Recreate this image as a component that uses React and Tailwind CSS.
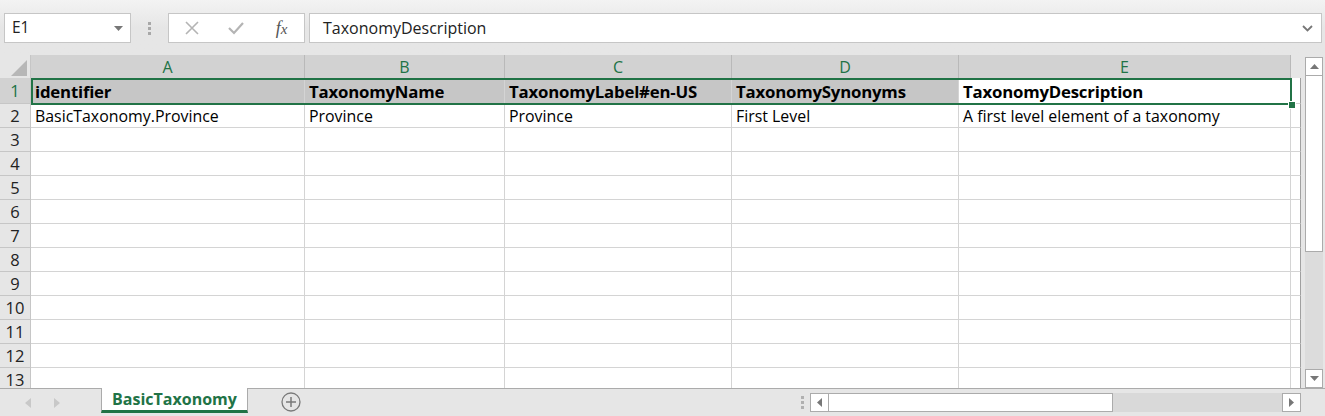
import React from 'react';

const columns = [
  { key: 'A', width: 'w-[274px]' },
  { key: 'B', width: 'w-[200px]' },
  { key: 'C', width: 'w-[227px]' },
  { key: 'D', width: 'w-[227px]' },
  { key: 'E', width: 'w-[332px]' },
];

const headerRow = ['identifier', 'TaxonomyName', 'TaxonomyLabel#en-US', 'TaxonomySynonyms', 'TaxonomyDescription'];
const dataRow = ['BasicTaxonomy.Province', 'Province', 'Province', 'First Level', 'A first level element of a taxonomy'];
const emptyRows = [3, 4, 5, 6, 7, 8, 9, 10, 11, 12, 13];

const FormulaBar = () => (
  <div className="h-[55px] flex items-start pt-[13px] bg-gradient-to-b from-[#f3f3f3] via-[#e6e6e6] to-[#e6e6e6]">
    {/* name box */}
    <div className="ml-[4px] w-[127px] h-[30px] bg-white border border-[#c6c6c6] flex items-center justify-between pl-[7px] pr-[7px]">
      <span className="text-[15.5px] text-[#222]">E1</span>
      <svg width="9" height="5" viewBox="0 0 9 5"><path d="M0 0h9L4.5 5z" fill="#777" /></svg>
    </div>
    <div className="w-[37px] h-[30px] flex flex-col items-center justify-center gap-[2px]">
      <div className="w-[3px] h-[3px] bg-[#a8a8a8]"></div>
      <div className="w-[3px] h-[3px] bg-[#a8a8a8]"></div>
      <div className="w-[3px] h-[3px] bg-[#a8a8a8]"></div>
    </div>
    {/* cancel / enter / fx */}
    <div className="w-[137px] h-[30px] bg-white border border-[#c6c6c6] flex items-center">
      <div className="w-[44px] flex justify-center pl-[2px]">
        <svg width="16" height="16" viewBox="0 0 16 16"><path d="M2 2l12 12M14 2L2 14" stroke="#b4b4b4" strokeWidth="1.6" /></svg>
      </div>
      <div className="w-[46px] flex justify-center">
        <svg width="18" height="16" viewBox="0 0 18 16"><path d="M2 8l5 5L16 3" stroke="#b4b4b4" strokeWidth="2.2" fill="none" /></svg>
      </div>
      <div className="w-[45px] flex justify-center">
        <span className="text-[18px] italic text-[#555] font-['Liberation_Serif',serif] leading-none">f<span className="text-[15px]">x</span></span>
      </div>
    </div>
    {/* formula input */}
    <div className="ml-[4px] w-[1013px] h-[30px] bg-white border border-[#c6c6c6] flex items-center justify-between pl-[13px] pr-[8px]">
      <span className="text-[16px] text-[#222]">TaxonomyDescription</span>
      <svg width="11" height="7" viewBox="0 0 11 7"><path d="M1 1l4.5 4.5L10 1" stroke="#777" strokeWidth="1.8" fill="none" /></svg>
    </div>
  </div>
);

const ColumnHeader = () => (
  <div className="flex h-[23px]">
    <div className="w-[31px] h-[23px] bg-[#e6e6e6] border-r border-[#c6c6c6] flex items-end justify-end pr-[3px] pb-[2px]">
      <svg width="16" height="16" viewBox="0 0 16 16"><path d="M16 0V16H0z" fill="#b7b7b7" /></svg>
    </div>
    {columns.map(c => (
      <div key={c.key} className={`${c.width} h-[23px] bg-[#d2d2d2] border-r border-[#b9b9b9] flex items-center justify-center text-[16px] text-[#217346]`}>
        {c.key}
      </div>
    ))}
    <div className="w-[10px] h-[23px] bg-[#e6e6e6]"></div>
  </div>
);

const RowHeader = ({ n, selected }) => (
  <div className={`w-[31px] h-full border-r border-b border-[#c6c6c6] flex items-center justify-center pt-[2px] text-[16.5px] ${selected ? 'bg-[#d2d2d2] text-[#217346]' : 'bg-[#e6e6e6] text-[#222]'}`}>
    {n}
  </div>
);

const Sheet = () => (
  <div className="flex-1 flex overflow-hidden">
    <div className="w-[1301px] flex flex-col overflow-hidden">
      <ColumnHeader />
      {/* row 1 with selection */}
      <div className="flex h-[26px] shrink-0 relative">
        <RowHeader n={1} selected />
        {columns.map((c, i) => (
          <div key={c.key} className={`${c.width} h-full border-r border-b border-[#d4d4d4] flex items-center pl-[4px] pt-[2px] text-[16.8px] font-bold text-black whitespace-nowrap tracking-[-0.2px] ${i < 4 ? 'bg-[#c6c6c6]' : 'bg-white'}`}>
            {headerRow[i]}
          </div>
        ))}
        <div className="w-[10px] h-full bg-white border-b border-r border-[#d4d4d4] border-r-[#a0a0a0]"></div>
        <div className="absolute left-[31px] top-0 w-[1261px] h-[27px] border-2 border-[#217346] pointer-events-none"></div>
        <div className="absolute left-[1288px] top-[23px] w-[6px] h-[6px] bg-[#217346] border border-white box-content"></div>
      </div>
      <div className="flex h-[24px] shrink-0">
        <RowHeader n={2} />
        {columns.map((c, i) => (
          <div key={c.key} className={`${c.width} h-full border-r border-b border-[#d4d4d4] bg-white flex items-center pl-[4px] pt-[2px] text-[15.9px] text-black whitespace-nowrap`}>
            {dataRow[i]}
          </div>
        ))}
        <div className="w-[10px] h-full bg-white border-b border-r border-[#d4d4d4] border-r-[#a0a0a0]"></div>
      </div>
      {emptyRows.map(n => (
        <div key={n} className="flex h-[24px] shrink-0">
          <RowHeader n={n} />
          {columns.map(c => (
            <div key={c.key} className={`${c.width} h-full border-r border-b border-[#d4d4d4] bg-white`}></div>
          ))}
          <div className="w-[10px] h-full bg-white border-b border-r border-[#d4d4d4] border-r-[#a0a0a0]"></div>
        </div>
      ))}
    </div>
    {/* vertical scrollbar */}
    <div className="w-[24px] flex flex-col pl-[4px] pr-[2px] pt-[2px]">
      <div className="h-[19px] bg-white border border-[#ababab] flex items-center justify-center">
        <svg width="9" height="5" viewBox="0 0 9 5"><path d="M0 5h9L4.5 0z" fill="#777" /></svg>
      </div>
      <div className="h-[176px] bg-white border border-[#ababab] border-t-0"></div>
      <div className="flex-1 bg-[#dcdcdc]"></div>
      <div className="h-[19px] bg-white border border-[#ababab] flex items-center justify-center">
        <svg width="9" height="5" viewBox="0 0 9 5"><path d="M0 0h9L4.5 5z" fill="#777" /></svg>
      </div>
    </div>
  </div>
);

const TabBar = () => (
  <div className="h-[28px] shrink-0 flex border-t border-[#ababab] bg-[#e6e6e6]">
    <div className="w-[101px] flex items-center pl-[24px] gap-[21px]">
      <svg width="8" height="10" viewBox="0 0 8 10"><path d="M7 0v10L1 5z" fill="#c8c8c8" /></svg>
      <svg width="8" height="10" viewBox="0 0 8 10"><path d="M1 0v10l6-5z" fill="#c8c8c8" /></svg>
    </div>
    <div className="w-[147px] h-[25px] bg-white border-x border-[#ababab] border-b-[3px] border-b-[#217346] flex items-center justify-center text-[16px] font-bold text-[#217346] -mt-px">
      BasicTaxonomy
    </div>
    <div className="w-[86px] flex items-center justify-center pb-[1px]">
      <svg width="20" height="20" viewBox="0 0 20 20">
        <circle cx="10" cy="10" r="9" stroke="#7a7a7a" strokeWidth="1.3" fill="none" />
        <path d="M10 5v10M5 10h10" stroke="#7a7a7a" strokeWidth="1.5" />
      </svg>
    </div>
    <div className="flex-1"></div>
    <div className="w-[16px] flex flex-col items-center justify-center gap-[2px]">
      <div className="w-[3px] h-[3px] bg-[#b0b0b0]"></div>
      <div className="w-[3px] h-[3px] bg-[#b0b0b0]"></div>
      <div className="w-[3px] h-[3px] bg-[#b0b0b0]"></div>
    </div>
    <div className="w-[491px] flex items-center pb-[1px]">
      <div className="w-[19px] h-[19px] bg-white border border-[#ababab] flex items-center justify-center">
        <svg width="5" height="9" viewBox="0 0 5 9"><path d="M5 0v9L0 4.5z" fill="#777" /></svg>
      </div>
      <div className="w-[284px] h-[19px] bg-white border border-[#ababab] border-l-0"></div>
      <div className="flex-1 h-[19px] bg-[#d9d9d9]"></div>
      <div className="w-[19px] h-[19px] bg-white border border-[#ababab] flex items-center justify-center">
        <svg width="5" height="9" viewBox="0 0 5 9"><path d="M0 0v9l5-4.5z" fill="#777" /></svg>
      </div>
    </div>
    <div className="w-[24px]"></div>
  </div>
);

export default function App() {
  return (
    <div className="w-[1325px] h-[416px] bg-[#e6e6e6] flex flex-col overflow-hidden font-['Open_Sans','Noto_Sans',sans-serif]">
      <FormulaBar />
      <Sheet />
      <TabBar />
    </div>
  );
}
